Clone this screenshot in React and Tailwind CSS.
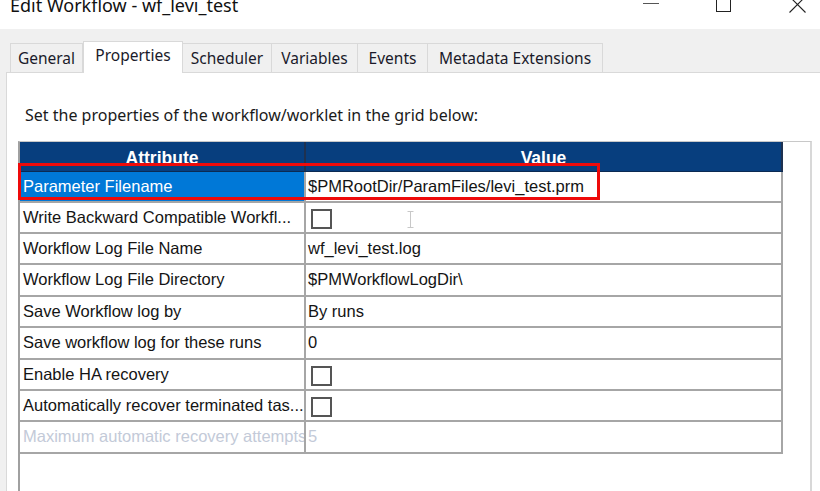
import React from "react";

const ui = { fontFamily: '"Noto Sans", "Open Sans", sans-serif' };
const grid = { fontFamily: '"Liberation Sans", Arial, sans-serif' };

const tabs = [
  { label: "General", w: "w-[73px]" },
  { label: "Properties", w: "w-[100px]", active: true },
  { label: "Scheduler", w: "w-[89px]" },
  { label: "Variables", w: "w-[86px]" },
  { label: "Events", w: "w-[70px]" },
  { label: "Metadata Extensions", w: "w-[175px]" },
];

const rows = [
  { h: "h-[31px]", attr: "Parameter Filename", value: "$PMRootDir/ParamFiles/levi_test.prm", selected: true },
  { h: "h-[31px]", attr: "Write Backward Compatible Workfl...", check: true },
  { h: "h-[31px]", attr: "Workflow Log File Name", value: "wf_levi_test.log" },
  { h: "h-[32px]", attr: "Workflow Log File Directory", value: "$PMWorkflowLogDir\\" },
  { h: "h-[31px]", attr: "Save Workflow log by", value: "By runs" },
  { h: "h-[32px]", attr: "Save workflow log for these runs", value: "0" },
  { h: "h-[31px]", attr: "Enable HA recovery", check: true },
  { h: "h-[31px]", attr: "Automatically recover terminated tas...", check: true },
  { h: "h-[32px]", attr: "Maximum automatic recovery attempts", value: "5", disabled: true },
];

function Checkbox() {
  return <div className="mt-[6px] ml-[3px] h-[20px] w-[21px] border-2 border-[#555555] bg-white" />;
}

export default function App() {
  return (
    <div className="w-[820px] h-[491px] overflow-hidden bg-[#f0f0f0] flex flex-col">
      {/* Title bar */}
      <div className="h-[29px] bg-white flex items-start shrink-0 overflow-hidden">
        <div style={ui} className="ml-[10px] mt-[-4px] text-[18px] leading-[18px] text-[#111]">
          Edit Workflow - wf_levi_test
        </div>
        <div className="ml-auto flex items-start">
          <svg width="16" height="6" className="mt-[2px]">
            <line x1="0" y1="1.5" x2="16" y2="1.5" stroke="#555" strokeWidth="1" />
          </svg>
          <svg width="15" height="14" className="ml-[57px] mt-[-2px]">
            <rect x="0.5" y="0.5" width="14" height="13" fill="none" stroke="#222" strokeWidth="1" />
          </svg>
          <svg width="17" height="17" className="ml-[58px] mt-[-4px] mr-[14px]">
            <path d="M0.5 0.5 L16.5 16.5 M16.5 0.5 L0.5 16.5" stroke="#222" strokeWidth="1.1" />
          </svg>
        </div>
      </div>

      {/* Tabs */}
      <div className="h-[43px] flex items-end pl-[10px] shrink-0">
        {tabs.map((t, i) =>
          t.active ? (
            <div
              key={t.label}
              style={ui}
              className={`${t.w} h-[32px] mb-[-1px] relative z-10 bg-white border-t border-l border-r border-[#d9d9d9] text-center pt-[3px] text-[15.5px] leading-[20px] text-[#1a1a2a]`}
            >
              {t.label}
            </div>
          ) : (
            <div
              key={t.label}
              style={ui}
              className={`${t.w} h-[29px] bg-[#f0f0f0] border-t border-r border-[#d9d9d9] ${i === 0 ? "border-l" : ""} text-center pt-[4px] text-[15.5px] leading-[20px] text-[#1a1a2a]`}
            >
              {t.label}
            </div>
          )
        )}
      </div>

      {/* Panel */}
      <div className="flex-1 ml-[6px] bg-white border-t border-l border-[#d9d9d9] flex flex-col min-h-0">
        <div style={ui} className="pl-[18px] pt-[32px] text-[16px] leading-[21px] text-[#1a1a1a]">
          Set the properties of the workflow/worklet in the grid below:
        </div>
        <div className="mt-[15px] ml-[11px] w-[794px] flex-1 relative border-t border-[#c8c8c8] border-l-2 border-l-[#a0a0a0] border-r-2 border-r-[#d8d8d8] bg-white" style={grid}>
          {/* Header */}
          <div className="flex h-[30px] w-[763px] bg-[#073e7e] border-b border-[#0b2a52] text-white font-bold text-[17.5px] leading-[20px]">
            <div className="w-[286px] border-r-2 border-[#1e3150] text-center pt-[6px]">Attribute</div>
            <div className="w-[477px] border-r-2 border-[#1e3150] text-center pt-[6px]">Value</div>
          </div>
          {/* Rows */}
          <div className="w-[763px]">
            {rows.map((r) => (
              <div key={r.attr} className={`${r.h} flex border-b-2 border-[#a6a6a6] text-[16.5px] leading-[20px]`}>
                <div
                  className={`w-[286px] border-r-2 border-[#a6a6a6] pl-[3px] pt-[4px] whitespace-nowrap overflow-hidden ${
                    r.selected ? "bg-[#0078d7] text-white" : r.disabled ? "text-[#c3cad8]" : "text-[#141414]"
                  }`}
                >
                  {r.attr}
                </div>
                <div
                  className={`w-[477px] border-r-2 border-[#a6a6a6] pl-[2px] whitespace-nowrap overflow-hidden ${
                    r.check ? "" : "pt-[4px]"
                  } ${r.disabled ? "text-[#c3cad8]" : "text-[#141414]"}`}
                >
                  {r.check ? <Checkbox /> : r.value}
                </div>
              </div>
            ))}
          </div>
          {/* Red highlight box */}
          <div className="absolute left-[-2px] top-[21px] w-[582px] h-[37px] border-[3px] border-[#ee0a0a] pointer-events-none" />
          {/* I-beam cursor */}
          <svg className="absolute left-[387px] top-[69px]" width="7" height="17">
            <path d="M0.5 0.5 H6.5 M3.5 0.5 V16.5 M0.5 16.5 H6.5" stroke="#c8c8c8" strokeWidth="1" fill="none" />
          </svg>
        </div>
      </div>
    </div>
  );
}
